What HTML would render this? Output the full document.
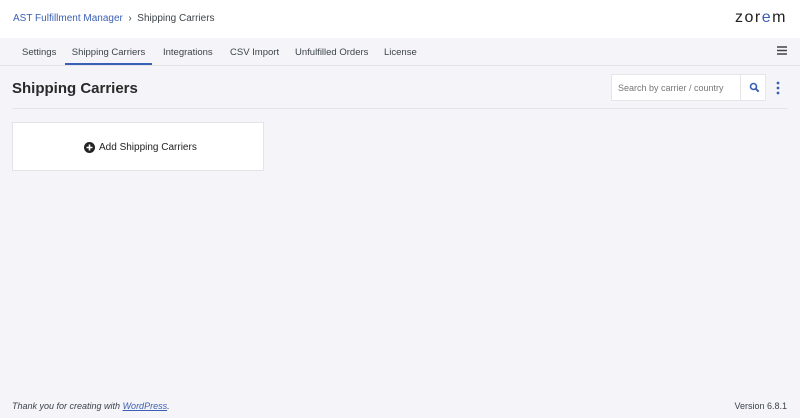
<!DOCTYPE html>
<html><head><style>
body{margin:0;width:800px;height:418px;background:#f4f4f9;font-family:"Liberation Sans",sans-serif;position:relative;overflow:hidden;color:#3c434a}
.top{position:absolute;left:0;top:0;width:800px;height:38px;background:#fff}
.bc{position:absolute;left:13px;top:13px;font-size:10px;color:#3c434a}
.bc a{color:#3b5fb5}
.logo{position:absolute;right:13px;top:9px;font-size:16px;letter-spacing:1.5px;color:#222}
.logo span{color:#3b5fb5}
.nav{position:absolute;top:38px;left:0;width:800px;height:27px;border-bottom:1px solid #e2e4e8}
.nav div{position:absolute;top:9px;font-size:9.5px;color:#3c434a}
.nav .act{border-bottom:2px solid #3b5fb5;height:16px}
h1{position:absolute;left:12px;top:80px;margin:0;font-size:15px;font-weight:bold;color:#2a2a2a}
.hr{position:absolute;left:12px;right:12px;top:108px;border-top:1px solid #e2e4e8}
.search{position:absolute;left:611px;top:74px;width:155px;height:27px;background:#fff;border:1px solid #e5e5ea;box-sizing:border-box}
.search span{position:absolute;left:6px;top:8px;font-size:9px;color:#777}
.search .btn{position:absolute;left:128px;top:0;width:26px;height:25px;border-left:1px solid #e5e5ea}
.card{position:absolute;left:12px;top:122px;width:252px;height:49px;background:#fff;border:1px solid #e3e3e8;box-sizing:border-box}
.card div{position:absolute;top:19px;font-size:10px;color:#222}
.foot{position:absolute;top:401px;font-size:9px;color:#3c434a}
</style></head><body>
<div class="top"><div class="bc"><a>AST Fulfillment Manager</a> &nbsp;›&nbsp; Shipping Carriers</div><div class="logo">zor<span>e</span>m</div></div>
<div class="nav">
<div style="left:22px">Settings</div>
<div class="act" style="left:65px;width:87px;text-align:center">Shipping Carriers</div>
<div style="left:163px">Integrations</div>
<div style="left:230px">CSV Import</div>
<div style="left:295px">Unfulfilled Orders</div>
<div style="left:384px">License</div>
<svg style="position:absolute;left:777px;top:8px" width="10" height="9"><path d="M0 1h10M0 4.5h10M0 8h10" stroke="#444" stroke-width="1.4"/></svg>
</div>
<h1>Shipping Carriers</h1>
<div class="hr"></div>
<div class="search"><span>Search by carrier / country</span><div class="btn"><svg style="position:absolute;left:8px;top:7px" width="11" height="11"><circle cx="4.5" cy="4.5" r="3" stroke="#3b5fb5" stroke-width="1.6" fill="none"/><path d="M6.7 6.7l3 3" stroke="#3b5fb5" stroke-width="2"/></svg></div></div>
<svg style="position:absolute;left:775px;top:81px" width="6" height="14"><circle cx="3" cy="2" r="1.4" fill="#3b5fb5"/><circle cx="3" cy="7" r="1.4" fill="#3b5fb5"/><circle cx="3" cy="12" r="1.4" fill="#3b5fb5"/></svg>
<div class="card"><svg style="position:absolute;left:71px;top:19px" width="11" height="11"><circle cx="5.5" cy="5.5" r="5.5" fill="#222"/><path d="M5.5 2.5v6M2.5 5.5h6" stroke="#fff" stroke-width="1.6"/></svg><div style="left:86px">Add Shipping Carriers</div></div>
<div class="foot" style="left:12px;font-style:italic">Thank you for creating with <a style="color:#3b5fb5;text-decoration:underline">WordPress</a>.</div>
<div class="foot" style="right:13px">Version 6.8.1</div>
</body></html>
